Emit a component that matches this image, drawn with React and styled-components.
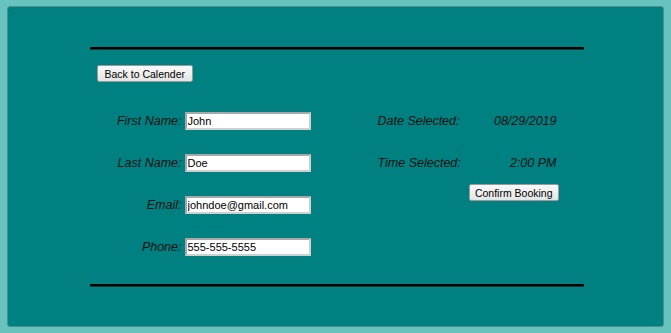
import React from "react";
import styled, { createGlobalStyle } from "styled-components";

const GlobalStyle = createGlobalStyle`
    html, body {
        margin: 0;
        padding: 0;
        background: #68c3be;
        font-family: "Liberation Sans", Arial, sans-serif;
    }
`

const Page = styled.div`
    padding: 6px 7px;
    height: 333px;
    box-sizing: border-box;
`

const Panel = styled.div`
    background: #008080;
    border: 1px solid #4a8f8c;
    border-radius: 3px;
    height: 100%;
    box-sizing: border-box;
    padding-top: 40px;
`

const Inner = styled.div`
    width: 494px;
    margin: 0 auto;
    padding-left: 2px;
`

const Rule = styled.hr`
    margin: 0;
    height: 0;
    border: none;
    border-top: 2px solid #000;
    border-bottom: 1px solid #1a3a3a;
`

const ButtonRow = styled.div`
    display: flex;
    padding: 15px 0 0 7px;
`

const PlainButton = styled.button`
    font-family: "Liberation Sans", Arial, sans-serif;
    font-size: 10.5px;
    color: #000;
    height: 17px;
    padding: 0 ${p => (p.wide ? "7px" : "5px")};
    background: linear-gradient(#fafafa, #e4e4e4);
    border: 1px solid #9a9a9a;
    border-radius: 2px;
    line-height: 14px;
`

const Columns = styled.div`
    display: flex;
    padding: 30px 25px 28px 0;
`

const Form = styled.div`
    display: grid;
    grid-template-columns: 92px 126px;
    column-gap: 3px;
    row-gap: 24px;
    align-items: center;
`

const Label = styled.span`
    font-size: 12.5px;
    font-style: italic;
    color: #111;
    text-align: ${p => (p.right ? "right" : "left")};
    line-height: 18px;
`

const Field = styled.input`
    box-sizing: border-box;
    width: 126px;
    height: 18px;
    border: 2px solid #a8a8a8;
    border-right-color: #d0d0d0;
    border-bottom-color: #d0d0d0;
    padding: 0 1px;
    font-family: "Liberation Sans", Arial, sans-serif;
    font-size: 11px;
    color: #000;
    background: #fff;
    outline: none;
`

const Summary = styled.div`
    margin-left: auto;
    width: 181px;
    display: flex;
    flex-direction: column;
`

const SummaryGrid = styled.div`
    display: grid;
    grid-template-columns: 1fr auto;
    row-gap: 24px;
    padding-right: 2px;
`

const ConfirmRow = styled.div`
    display: flex;
    justify-content: flex-end;
    margin-top: 12px;
`

const fields = [
    { label: "First Name:", value: "John" },
    { label: "Last Name:", value: "Doe" },
    { label: "Email:", value: "johndoe@gmail.com" },
    { label: "Phone:", value: "555-555-5555" },
];

const summary = [
    { label: "Date Selected:", value: "08/29/2019" },
    { label: "Time Selected:", value: "2:00 PM" },
];

const App = () => {
    return (
        <Page>
            <GlobalStyle />
            <Panel>
                <Inner>
                    <Rule />
                    <ButtonRow>
                        <PlainButton wide>Back to Calender</PlainButton>
                    </ButtonRow>
                    <Columns>
                        <Form>
                            {fields.map((f, i) => (
                                <React.Fragment key={i}>
                                    <Label right>{f.label}</Label>
                                    <Field defaultValue={f.value} />
                                </React.Fragment>
                            ))}
                        </Form>
                        <Summary>
                            <SummaryGrid>
                                {summary.map((s, i) => (
                                    <React.Fragment key={i}>
                                        <Label>{s.label}</Label>
                                        <Label right>{s.value}</Label>
                                    </React.Fragment>
                                ))}
                            </SummaryGrid>
                            <ConfirmRow>
                                <PlainButton>Confirm Booking</PlainButton>
                            </ConfirmRow>
                        </Summary>
                    </Columns>
                    <Rule />
                </Inner>
            </Panel>
        </Page>
    )
}

export default App;
